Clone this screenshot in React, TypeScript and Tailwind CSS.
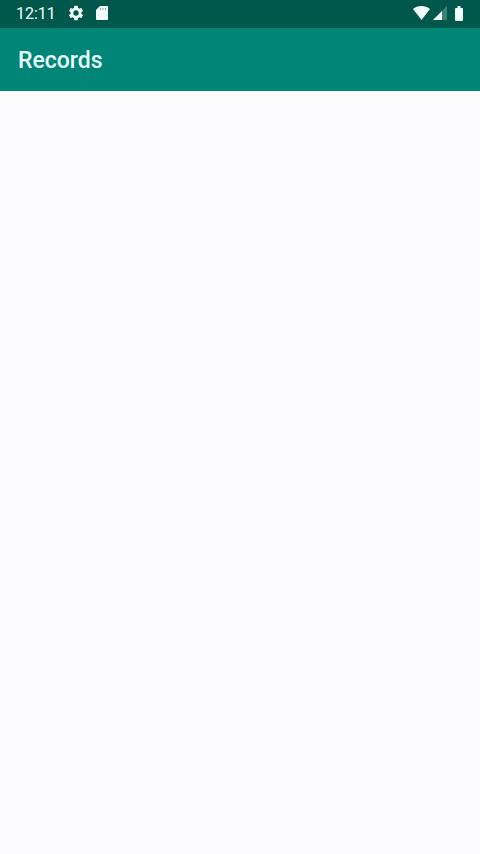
function SettingsIcon() {
  return (
    <svg viewBox="0 0 24 24" className="size-[18px]" fill="currentColor" aria-hidden="true">
      <path d="M19.14 12.94c.04-.3.06-.61.06-.94 0-.32-.02-.64-.07-.94l2.03-1.58a.49.49 0 0 0 .12-.61l-1.92-3.32a.49.49 0 0 0-.59-.22l-2.39.96a7 7 0 0 0-1.62-.94l-.36-2.54a.48.48 0 0 0-.48-.41h-3.84a.47.47 0 0 0-.47.41l-.36 2.54c-.59.24-1.13.57-1.62.94l-2.39-.96a.48.48 0 0 0-.59.22L2.74 8.87a.47.47 0 0 0 .12.61l2.03 1.58c-.05.3-.09.63-.09.94s.02.64.07.94l-2.03 1.58a.49.49 0 0 0-.12.61l1.92 3.32c.12.22.37.29.59.22l2.39-.96c.5.38 1.03.7 1.62.94l.36 2.54c.05.24.24.41.48.41h3.84c.24 0 .44-.17.47-.41l.36-2.54a7 7 0 0 0 1.62-.94l2.39.96c.22.08.47 0 .59-.22l1.92-3.32a.47.47 0 0 0-.12-.61l-2.01-1.58zM12 15.6a3.6 3.6 0 1 1 0-7.2 3.6 3.6 0 0 1 0 7.2z" />
    </svg>
  );
}

function SdCardIcon() {
  return (
    <svg viewBox="0 0 12 14" className="h-[14px] w-[12px]" fill="currentColor" aria-hidden="true">
      <path d="M4 0h7a1 1 0 0 1 1 1v12a1 1 0 0 1-1 1H1a1 1 0 0 1-1-1V4z" />
      <path d="M4.5 2v2M7 2v2M9.5 2v2" stroke="#00574b" strokeOpacity="0.5" />
    </svg>
  );
}

function WifiIcon() {
  return (
    <svg viewBox="0 0 17 14" className="h-[14px] w-[17px]" fill="currentColor" aria-hidden="true">
      <path d="M8.5 14 0 3c2.300-2 5.200-3 8.500-3s6.200 1 8.500 3z" />
    </svg>
  );
}

function SignalIcon() {
  return (
    <svg viewBox="0 0 14 14" className="size-[14px]" fill="currentColor" aria-hidden="true">
      <path d="M14 0v14H0z" fillOpacity="0.25" />
      <path d="M9 5v9H0z" />
    </svg>
  );
}

function BatteryIcon() {
  return (
    <svg viewBox="0 0 8 15" className="h-[15px] w-[8px]" fill="currentColor" aria-hidden="true">
      <path d="M2.500 0h3v2H7a1 1 0 0 1 1 1v11a1 1 0 0 1-1 1H1a1 1 0 0 1-1-1V3a1 1 0 0 1 1-1h1.500z" />
    </svg>
  );
}

function StatusBar() {
  return (
    <div className="flex h-7 items-center justify-between bg-[#00574b] px-4 pb-0.5 text-[#f2fffc]">
      <div className="flex items-center">
        <span className="w-[51px] pt-0.5 text-base leading-5">12:11</span>
        <SettingsIcon />
        <span className="ml-[11px]">
          <SdCardIcon />
        </span>
      </div>
      <div className="flex items-center pr-px">
        <WifiIcon />
        <span className="ml-[3px]">
          <SignalIcon />
        </span>
        <span className="ml-2">
          <BatteryIcon />
        </span>
      </div>
    </div>
  );
}

export default function App() {
  return (
    <div className="flex min-h-screen flex-col bg-[#fcfcfe] font-['Roboto',sans-serif]">
      <StatusBar />
      <header className="flex h-[63px] items-center bg-[#008577] px-[18px] pt-0.5">
        <h1 className="text-[23px] leading-7 font-medium text-[#e6fffa]">Records</h1>
      </header>
      <main className="flex-1" />
    </div>
  );
}
